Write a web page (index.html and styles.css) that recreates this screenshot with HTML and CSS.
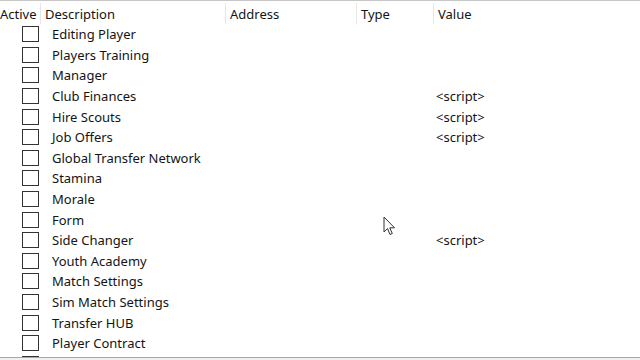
FILE: index.html
```html
<!DOCTYPE html>
<html>
<head>
<meta charset="utf-8">
<link rel="stylesheet" href="styles.css">
</head>
<body>
<div class="table">
  <div class="header">
    <div class="col c-active">Active</div>
    <div class="col c-desc">Description</div>
    <div class="col c-addr">Address</div>
    <div class="col c-type">Type</div>
    <div class="col c-val">Value</div>
  </div>
  <div class="rows">
    <div class="row"><span class="box"></span><span class="desc">Editing Player</span><span class="val"></span></div>
    <div class="row"><span class="box"></span><span class="desc">Players Training</span><span class="val"></span></div>
    <div class="row"><span class="box"></span><span class="desc">Manager</span><span class="val"></span></div>
    <div class="row"><span class="box"></span><span class="desc">Club Finances</span><span class="val">&lt;script&gt;</span></div>
    <div class="row"><span class="box"></span><span class="desc">Hire Scouts</span><span class="val">&lt;script&gt;</span></div>
    <div class="row"><span class="box"></span><span class="desc">Job Offers</span><span class="val">&lt;script&gt;</span></div>
    <div class="row"><span class="box"></span><span class="desc">Global Transfer Network</span><span class="val"></span></div>
    <div class="row"><span class="box"></span><span class="desc">Stamina</span><span class="val"></span></div>
    <div class="row"><span class="box"></span><span class="desc">Morale</span><span class="val"></span></div>
    <div class="row"><span class="box"></span><span class="desc">Form</span><span class="val"></span></div>
    <div class="row"><span class="box"></span><span class="desc">Side Changer</span><span class="val">&lt;script&gt;</span></div>
    <div class="row"><span class="box"></span><span class="desc">Youth Academy</span><span class="val"></span></div>
    <div class="row"><span class="box"></span><span class="desc">Match Settings</span><span class="val"></span></div>
    <div class="row"><span class="box"></span><span class="desc">Sim Match Settings</span><span class="val"></span></div>
    <div class="row"><span class="box"></span><span class="desc">Transfer HUB</span><span class="val"></span></div>
    <div class="row"><span class="box"></span><span class="desc">Player Contract</span><span class="val"></span></div>
    <div class="row"><span class="box"></span><span class="desc"></span><span class="val"></span></div>
  </div>
  <div class="scrollbar"></div>
</div>
<svg class="cursor" width="14" height="20" viewBox="0 0 14 20"><path d="M1 1 L1 16 L4.5 12.5 L7 18.5 L9.3 17.5 L6.8 11.8 L11.5 11.8 Z" fill="#fff" stroke="#333" stroke-width="1" stroke-linejoin="round"/></svg>
</body>
</html>
```
FILE: styles.css
```css
html, body {
  margin: 0;
  padding: 0;
  background: #fff;
}
body {
  width: 640px;
  height: 360px;
  overflow: hidden;
  position: relative;
  font-family: "Noto Sans", "Open Sans", sans-serif;
  font-size: 13px;
  color: #141414;
}
.table {
  display: flex;
  flex-direction: column;
  height: 360px;
}
.header {
  display: flex;
  height: 24px;
  border-top: 1px solid #c6c6c6;
  box-sizing: border-box;
  flex: none;
  padding-top: 2px;
}
.col {
  padding-left: 4px;
  box-sizing: border-box;
  border-right: 1px solid #e6e6e6;
  height: 21px;
  line-height: 22px;
}
.c-active { width: 41px; padding-left: 0; }
.c-desc { width: 185px; }
.c-addr { width: 131px; }
.c-type { width: 77px; }
.c-val { flex: 1; border-right: none; }
.rows {
  flex: 1;
  overflow: hidden;
}
.row {
  display: flex;
  align-items: center;
  height: 20.6px;
}
.box {
  width: 17px;
  height: 16px;
  box-sizing: border-box;
  border: 1px solid #333;
  margin-left: 22px;
  flex: none;
}
.desc {
  margin-left: 13px;
  width: 384px;
  flex: none;
  white-space: nowrap;
}
.val {
  white-space: nowrap;
}
.scrollbar {
  flex: none;
  height: 2px;
  border-top: 1px solid #a8a8a8;
  background: #f0f0f0;
}
.cursor {
  position: absolute;
  left: 383px;
  top: 216px;
}
```
